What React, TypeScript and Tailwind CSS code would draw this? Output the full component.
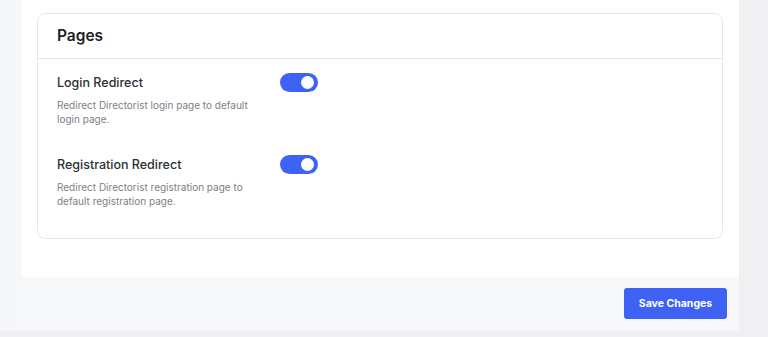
import React from "react";

function Toggle() {
  return (
    <div className="relative h-[19px] w-[38px] shrink-0 rounded-full bg-[#3e63f4]">
      <div className="absolute right-[4px] top-[3px] h-[13px] w-[13px] rounded-full bg-white" />
    </div>
  );
}

function Row({ title, desc }: { title: string; desc: string }) {
  return (
    <div className="flex items-start">
      <div className="w-[200px]">
        <div className="text-[12.5px] font-medium leading-[15px] text-[#2c2f36]">{title}</div>
        <div className="mt-[8px] text-[10px] leading-[14px] text-[#7d8086]">{desc}</div>
      </div>
      <div className="ml-[23px] mt-[-2px]">
        <Toggle />
      </div>
    </div>
  );
}

export default function App() {
  return (
    <div
      className="flex h-[337px] w-[768px] flex-col bg-[#f0f0f2]"
      style={{ fontFamily: "Inter, 'Noto Sans', sans-serif" }}
    >
      <div className="flex h-[331px]">
        <div className="w-[22px] bg-[#f6f7f8]" />
        <div className="flex w-[717px] flex-col bg-white">
          <div className="px-[15px] pt-[13px]">
            <div className="h-[226px] w-[686px] rounded-[8px] border border-[#e6e7ea]">
              <div className="flex h-[45px] items-center border-b border-[#e6e7ea] px-[19px]">
                <div className="text-[15.5px] font-semibold text-[#1d1f24]">Pages</div>
              </div>
              <div className="flex flex-col gap-[31px] px-[19px] pt-[16px]">
                <Row title="Login Redirect" desc="Redirect Directorist login page to default login page." />
                <Row
                  title="Registration Redirect"
                  desc="Redirect Directorist registration page to default registration page."
                />
              </div>
            </div>
          </div>
          <div className="flex-1" />
          <div className="flex h-[54px] items-start justify-end bg-[#f7f8f9] pr-[12px] pt-[11px]">
            <button className="h-[31px] w-[103px] rounded-[3px] bg-[#3e63f4] text-[10.5px] font-bold text-white">
              Save Changes
            </button>
          </div>
        </div>
        <div className="flex-1 bg-[#f0f0f2]" />
      </div>
    </div>
  );
}
